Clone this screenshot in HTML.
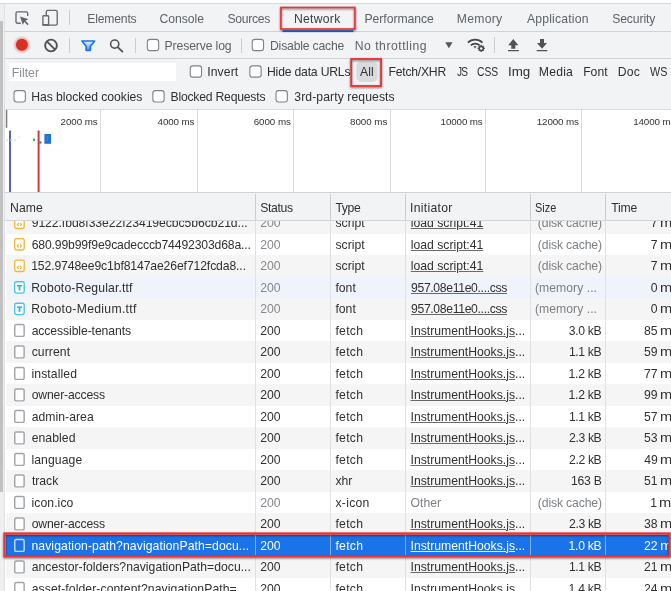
<!DOCTYPE html>
<html lang="en"><head><meta charset="utf-8"><title>DevTools - Network</title>
<style>
html,body{margin:0;padding:0;background:#fff}
body{width:671px;height:591px;overflow:hidden;position:relative;font-family:"Liberation Sans",sans-serif}
#root{will-change:transform;position:absolute;left:0;top:0;width:671px;height:591px;overflow:hidden;background:#fff}
.a{position:absolute}
.t{position:absolute;white-space:pre;line-height:16px;height:16px}
.bar{position:absolute;left:5px;width:666px;background:#f1f3f4}
.hl{position:absolute;left:5px;width:666px;height:1px;background:#cfd1d5}
.vs{position:absolute;width:1px;background:#cbcdd1}
.row{position:absolute;left:6px;width:665px;height:21.5px}
.lnk{text-decoration:underline;text-underline-offset:1.2px;text-decoration-thickness:0.9px;text-decoration-color:rgba(70,70,70,.8)}
.lnk3 u{text-decoration:underline;text-underline-offset:1.2px;text-decoration-thickness:0.9px;text-decoration-color:rgba(70,70,70,.8)}
.sel.lnk,.sel u{text-decoration-color:rgba(255,255,255,.9)}
.cl{position:absolute;width:1px;background:#dfe1e5}
</style></head><body><div id="root">

<div class="a" style="left:0;top:4px;width:4px;height:587px;background:#efefef"></div>
<div class="a" style="left:3.7px;top:4px;width:1px;height:587px;background:#dfe1e3"></div>
<div class="a" style="left:0;top:21px;width:2.6px;height:471px;background:#c1c1c1"></div>
<div class="a" style="left:0;top:3px;width:671px;height:1px;background:#d6d7d9"></div>
<div class="bar" style="top:4px;height:105px"></div>
<div class="hl" style="top:31px"></div>
<div class="hl" style="top:58px;background:#d0d2d6"></div>
<div class="hl" style="top:109px;background:#d5d7da"></div>
<svg class="a" style="left:12px;top:8px;overflow:visible" width="21" height="21"><g transform="translate(0.4 0)"><path d="M15.3 7.9V5.2a1.4 1.4 0 0 0-1.4-1.4H5a1.4 1.4 0 0 0-1.4 1.4v8.6A1.4 1.4 0 0 0 5 15.2h3.4" fill="none" stroke="#666a6e" stroke-width="1.35"/>
<path d="M7.7 8.4l8.4 2.9-3.2 1.4 3.4 3.4-1.1 1.1-3.4-3.4-1.4 3.1z" fill="#5f6368"/></g></svg>
<svg class="a" style="left:40px;top:8px;overflow:visible" width="21" height="21"><rect x="6.3" y="2.4" width="10.9" height="14.7" rx="1.4" fill="none" stroke="#666a6e" stroke-width="1.35"/>
<rect x="2.9" y="7.7" width="5.7" height="9.4" rx="0.8" fill="#f1f3f4" stroke="#666a6e" stroke-width="1.35"/>
<rect x="2.2" y="15.9" width="7.1" height="1.9" rx="0.8" fill="#666a6e"/></svg>
<div class="vs" style="left:69px;top:10px;height:15px"></div>
<svg class="a" style="left:282px;top:30px;overflow:visible" width="73" height="4"><g transform="translate(0.5 0.2)"><rect x="0" y="0" width="71" height="1.9" fill="#1a66d6"/></g></svg>
<svg class="a" style="left:280px;top:6px;overflow:visible;filter:drop-shadow(0.8px 1.3px 1.2px rgba(0,0,0,.55))" width="77" height="25"><g transform="translate(0.1 0.7)"><rect x="0.8" y="0.8" width="74.0" height="21.5" fill="none" stroke="#f03035" stroke-width="1.6"/></g></svg>
<svg class="a" style="left:14px;top:37px;overflow:visible" width="17" height="17"><defs><radialGradient id="rg"><stop offset="0.62" stop-color="#d93025" stop-opacity="0.38"/><stop offset="1" stop-color="#d93025" stop-opacity="0"/></radialGradient></defs><circle cx="7.9" cy="7.85" r="9.2" fill="url(#rg)"/><circle cx="7.9" cy="7.85" r="6.0" fill="#d93025"/></svg>
<svg class="a" style="left:43px;top:37px;overflow:visible" width="18" height="18"><circle cx="8.0" cy="8.5" r="5.85" fill="none" stroke="#505255" stroke-width="1.9"/><path d="M3.9 4.4l8.2 8.2" stroke="#505255" stroke-width="1.9"/></svg>
<div class="vs" style="left:69px;top:38px;height:15px"></div>
<svg class="a" style="left:80px;top:38px;overflow:visible" width="18" height="16"><defs><linearGradient id="fg" x1="0" y1="0" x2="0" y2="1"><stop offset="0" stop-color="#eef3fb"/><stop offset="0.45" stop-color="#a9c8f6"/><stop offset="1" stop-color="#3f86ee"/></linearGradient></defs>
<path d="M1.9 3h12.7l-4.2 5.3v3.6a0.6 0.6 0 0 1-0.6 0.6H6.7a0.6 0.6 0 0 1-0.6-0.6V8.3z" fill="url(#fg)" stroke="#1a73e8" stroke-width="1.6" stroke-linejoin="round"/></svg>
<svg class="a" style="left:108px;top:37px;overflow:visible" width="18" height="17"><g transform="translate(0 0.7)"><circle cx="6.7" cy="6.4" r="4.1" fill="none" stroke="#4f5256" stroke-width="1.6"/><path d="M9.7 9.4l5.2 5" stroke="#4f5256" stroke-width="1.8"/></g></svg>
<div class="vs" style="left:135px;top:38px;height:15px"></div>
<svg class="a" style="left:146px;top:38px;overflow:visible" width="14" height="14"><g transform="translate(0.8 0.8)"><rect x="0.55" y="0.55" width="11.3" height="11.3" rx="2.5" fill="#fff" stroke="#808285" stroke-width="1.1"/></g></svg>
<div class="vs" style="left:241px;top:38px;height:15px"></div>
<svg class="a" style="left:251px;top:38px;overflow:visible" width="14" height="14"><g transform="translate(0.7 0.8)"><rect x="0.55" y="0.55" width="11.3" height="11.3" rx="2.5" fill="#fff" stroke="#808285" stroke-width="1.1"/></g></svg>
<svg class="a" style="left:444px;top:41px;overflow:visible" width="10" height="8"><g transform="translate(0.6 0.8)"><path d="M0.6 0.4h7.4L4.3 6.4z" fill="#55585c"/></g></svg>
<svg class="a" style="left:466px;top:37px;overflow:visible" width="22" height="18"><path d="M1.9 5.6a10.3 10.3 0 0 1 14.6 0" fill="none" stroke="#45474a" stroke-width="1.7"/>
<path d="M4.8 8.4a6.3 6.3 0 0 1 8.8 0" fill="none" stroke="#45474a" stroke-width="1.7"/>
<path d="M7.4 9.3h3.2l-1.6 2.1z" fill="#45474a"/>
<g transform="translate(15.2 11.4)"><circle r="2.15" fill="none" stroke="#45474a" stroke-width="1.5"/>
<path d="M0 -3.6v7.2M-3.6 0h7.2M-2.5 -2.5l5 5M2.5 -2.5l-5 5" stroke="#45474a" stroke-width="1.15"/>
<circle r="1.25" fill="#f1f3f4"/></g></svg>
<div class="vs" style="left:494px;top:37px;height:16px"></div>
<svg class="a" style="left:507px;top:38px;overflow:visible" width="14" height="15"><path d="M6.3 0.9l5.1 6.3H8.3v3.6H4.3V7.2H1.2z" fill="#505255"/><rect x="1.0" y="12" width="10.8" height="1.25" fill="#505255"/></svg>
<svg class="a" style="left:535px;top:38px;overflow:visible" width="14" height="15"><g transform="translate(0.5 0)"><path d="M6.5 10.8L1.5 4.9h3V0.9h4v4h3z" fill="#505255"/><rect x="1.2" y="12" width="10.6" height="1.25" fill="#505255"/></g></svg>
<div class="a" style="left:9px;top:63px;width:167px;height:18px;background:#fff"></div>
<svg class="a" style="left:189px;top:65px;overflow:visible" width="14" height="14"><g transform="translate(0.7 0.3)"><rect x="0.55" y="0.55" width="11.3" height="11.3" rx="2.5" fill="#fff" stroke="#808285" stroke-width="1.1"/></g></svg>
<svg class="a" style="left:249px;top:65px;overflow:visible" width="14" height="14"><g transform="translate(0.3 0.3)"><rect x="0.55" y="0.55" width="11.3" height="11.3" rx="2.5" fill="#fff" stroke="#808285" stroke-width="1.1"/></g></svg>
<svg class="a" style="left:356px;top:61px;overflow:visible" width="23" height="22"><g transform="translate(0.4 0.4)"><rect x="0" y="0" width="21.2" height="20.6" rx="5" fill="#d8dadd"/></g></svg>
<svg class="a" style="left:350px;top:58px;overflow:visible;filter:drop-shadow(0.8px 1.3px 1.2px rgba(0,0,0,.55))" width="33" height="30"><g transform="translate(0.3 0.1)"><rect x="0.9" y="0.9" width="29.9" height="27.0" fill="none" stroke="#f03035" stroke-width="1.8"/></g></svg>
<svg class="a" style="left:13px;top:90px;overflow:visible" width="14" height="14"><g transform="translate(0.5 0.1)"><rect x="0.55" y="0.55" width="11.3" height="11.3" rx="2.5" fill="#fff" stroke="#808285" stroke-width="1.1"/></g></svg>
<svg class="a" style="left:152px;top:90px;overflow:visible" width="14" height="14"><g transform="translate(0.3 0.1)"><rect x="0.55" y="0.55" width="11.3" height="11.3" rx="2.5" fill="#fff" stroke="#808285" stroke-width="1.1"/></g></svg>
<svg class="a" style="left:275px;top:90px;overflow:visible" width="14" height="14"><g transform="translate(0.5 0.1)"><rect x="0.55" y="0.55" width="11.3" height="11.3" rx="2.5" fill="#fff" stroke="#808285" stroke-width="1.1"/></g></svg>
<div class="a" style="left:6px;top:110px;width:665px;height:82px;background:#fff"></div>
<div class="a" style="left:100px;top:110px;width:1px;height:82px;background:#dcdcdc"></div>
<div class="a" style="left:197px;top:110px;width:1px;height:82px;background:#dcdcdc"></div>
<div class="a" style="left:293px;top:110px;width:1px;height:82px;background:#dcdcdc"></div>
<div class="a" style="left:390px;top:110px;width:1px;height:82px;background:#dcdcdc"></div>
<div class="a" style="left:485px;top:110px;width:1px;height:82px;background:#dcdcdc"></div>
<div class="a" style="left:581px;top:110px;width:1px;height:82px;background:#dcdcdc"></div>
<svg class="a" style="left:0;top:0" width="120" height="195"><rect x="5.8" y="110" width="1.5" height="17.8" fill="#7d7d7d"/><rect x="9" y="130.5" width="2" height="61.5" fill="#5e5fc3"/><rect x="37.6" y="130.5" width="2" height="61.5" fill="#d8383c"/><rect x="44.4" y="134" width="6.6" height="9.8" fill="#1f6fe0"/><rect x="46.6" y="136" width="1.6" height="5" fill="#2e9d6b"/><rect x="33" y="138.6" width="2" height="2.4" fill="#36b06a"/><rect x="39.4" y="141.4" width="2" height="2.2" fill="#1f8a4d"/><rect x="6.5" y="139" width="1.6" height="2.4" fill="#c9ecf2"/><rect x="10.5" y="139" width="1.6" height="2.4" fill="#c9ecf2"/><rect x="14" y="139" width="1.6" height="2.4" fill="#c9ecf2"/><rect x="18.5" y="135.5" width="1" height="3" fill="#e3e6ea"/></svg>
<div class="hl" style="top:192px;left:5px"></div>
<div class="row" style="top:212.0px;background:#f5f5f5"></div>
<div class="row" style="top:233.5px;background:#fff"></div>
<div class="row" style="top:255.0px;background:#f5f5f5"></div>
<div class="row" style="top:276.5px;background:#eef3fc"></div>
<div class="row" style="top:298.0px;background:#f5f5f5"></div>
<div class="row" style="top:319.5px;background:#fff"></div>
<div class="row" style="top:341.0px;background:#f5f5f5"></div>
<div class="row" style="top:362.5px;background:#fff"></div>
<div class="row" style="top:384.0px;background:#f5f5f5"></div>
<div class="row" style="top:405.5px;background:#fff"></div>
<div class="row" style="top:427.0px;background:#f5f5f5"></div>
<div class="row" style="top:448.5px;background:#fff"></div>
<div class="row" style="top:470.0px;background:#f5f5f5"></div>
<div class="row" style="top:491.5px;background:#fff"></div>
<div class="row" style="top:513.0px;background:#f5f5f5"></div>
<div class="row" style="top:534.5px;background:#1a73e8;width:663px"></div>
<div class="row" style="top:556.0px;background:#f5f5f5"></div>
<div class="row" style="top:577.5px;background:#fff"></div>
<div class="cl" style="left:255px;top:221px;height:370px"></div>
<div class="cl" style="left:255px;top:534.5px;height:21.5px;background:#7fb0f2"></div>
<div class="cl" style="left:330px;top:221px;height:370px"></div>
<div class="cl" style="left:330px;top:534.5px;height:21.5px;background:#7fb0f2"></div>
<div class="cl" style="left:405px;top:221px;height:370px"></div>
<div class="cl" style="left:405px;top:534.5px;height:21.5px;background:#7fb0f2"></div>
<div class="cl" style="left:530px;top:221px;height:370px"></div>
<div class="cl" style="left:530px;top:534.5px;height:21.5px;background:#7fb0f2"></div>
<div class="cl" style="left:605px;top:221px;height:370px"></div>
<div class="cl" style="left:605px;top:534.5px;height:21.5px;background:#7fb0f2"></div>
<svg class="a" style="left:13px;top:215px;overflow:visible" width="13" height="15"><g transform="translate(0.5 0.85)"><rect x="1.2" y="1.2" width="9.5" height="11.4" rx="1.8" fill="#fffefa" stroke="#efb73e" stroke-width="1.35"/><path d="M5.25 7.1L3.85 8.55l1.4 1.45M6.65 7.1l1.4 1.45-1.4 1.45" fill="none" stroke="#efb73e" stroke-width="1.25"/></g></svg>
<svg class="a" style="left:13px;top:237px;overflow:visible" width="13" height="15"><g transform="translate(0.5 0.35)"><rect x="1.2" y="1.2" width="9.5" height="11.4" rx="1.8" fill="#fffefa" stroke="#efb73e" stroke-width="1.35"/><path d="M5.25 7.1L3.85 8.55l1.4 1.45M6.65 7.1l1.4 1.45-1.4 1.45" fill="none" stroke="#efb73e" stroke-width="1.25"/></g></svg>
<svg class="a" style="left:13px;top:258px;overflow:visible" width="13" height="15"><g transform="translate(0.5 0.85)"><rect x="1.2" y="1.2" width="9.5" height="11.4" rx="1.8" fill="#fffefa" stroke="#efb73e" stroke-width="1.35"/><path d="M5.25 7.1L3.85 8.55l1.4 1.45M6.65 7.1l1.4 1.45-1.4 1.45" fill="none" stroke="#efb73e" stroke-width="1.25"/></g></svg>
<svg class="a" style="left:13px;top:280px;overflow:visible" width="13" height="15"><g transform="translate(0.5 0.55)"><rect x="1.2" y="1.2" width="9.5" height="11.4" rx="1.8" fill="#fff" stroke="#45c4e4" stroke-width="1.35"/><path d="M3.5 5.1h5" fill="none" stroke="#2bb0dc" stroke-width="1.5"/><path d="M6 5.1v4.7" fill="none" stroke="#2bb0dc" stroke-width="1.8"/></g></svg>
<svg class="a" style="left:13px;top:302px;overflow:visible" width="13" height="15"><g transform="translate(0.5 0.05)"><rect x="1.2" y="1.2" width="9.5" height="11.4" rx="1.8" fill="#fff" stroke="#45c4e4" stroke-width="1.35"/><path d="M3.5 5.1h5" fill="none" stroke="#2bb0dc" stroke-width="1.5"/><path d="M6 5.1v4.7" fill="none" stroke="#2bb0dc" stroke-width="1.8"/></g></svg>
<svg class="a" style="left:13px;top:323px;overflow:visible" width="13" height="15"><g transform="translate(0.5 0.3)"><rect x="1.25" y="1.3" width="9.4" height="11.8" rx="1.5" fill="#fff" stroke="#a1a5aa" stroke-width="1.45"/></g></svg>
<svg class="a" style="left:13px;top:344px;overflow:visible" width="13" height="15"><g transform="translate(0.5 0.8)"><rect x="1.25" y="1.3" width="9.4" height="11.8" rx="1.5" fill="#fff" stroke="#a1a5aa" stroke-width="1.45"/></g></svg>
<svg class="a" style="left:13px;top:366px;overflow:visible" width="13" height="15"><g transform="translate(0.5 0.3)"><rect x="1.25" y="1.3" width="9.4" height="11.8" rx="1.5" fill="#fff" stroke="#a1a5aa" stroke-width="1.45"/></g></svg>
<svg class="a" style="left:13px;top:387px;overflow:visible" width="13" height="15"><g transform="translate(0.5 0.8)"><rect x="1.25" y="1.3" width="9.4" height="11.8" rx="1.5" fill="#fff" stroke="#a1a5aa" stroke-width="1.45"/></g></svg>
<svg class="a" style="left:13px;top:409px;overflow:visible" width="13" height="15"><g transform="translate(0.5 0.3)"><rect x="1.25" y="1.3" width="9.4" height="11.8" rx="1.5" fill="#fff" stroke="#a1a5aa" stroke-width="1.45"/></g></svg>
<svg class="a" style="left:13px;top:430px;overflow:visible" width="13" height="15"><g transform="translate(0.5 0.8)"><rect x="1.25" y="1.3" width="9.4" height="11.8" rx="1.5" fill="#fff" stroke="#a1a5aa" stroke-width="1.45"/></g></svg>
<svg class="a" style="left:13px;top:452px;overflow:visible" width="13" height="15"><g transform="translate(0.5 0.3)"><rect x="1.25" y="1.3" width="9.4" height="11.8" rx="1.5" fill="#fff" stroke="#a1a5aa" stroke-width="1.45"/></g></svg>
<svg class="a" style="left:13px;top:473px;overflow:visible" width="13" height="15"><g transform="translate(0.5 0.8)"><rect x="1.25" y="1.3" width="9.4" height="11.8" rx="1.5" fill="#fff" stroke="#a1a5aa" stroke-width="1.45"/></g></svg>
<svg class="a" style="left:13px;top:495px;overflow:visible" width="13" height="15"><g transform="translate(0.5 0.3)"><rect x="1.25" y="1.3" width="9.4" height="11.8" rx="1.5" fill="#fff" stroke="#a1a5aa" stroke-width="1.45"/></g></svg>
<svg class="a" style="left:13px;top:516px;overflow:visible" width="13" height="15"><g transform="translate(0.5 0.8)"><rect x="1.25" y="1.3" width="9.4" height="11.8" rx="1.5" fill="#fff" stroke="#a1a5aa" stroke-width="1.45"/></g></svg>
<svg class="a" style="left:13px;top:538px;overflow:visible" width="13" height="15"><g transform="translate(0.5 0.3)"><rect x="1.25" y="1.3" width="9.4" height="11.8" rx="1.5" fill="#1a73e8" stroke="#c6dafa" stroke-width="1.45"/></g></svg>
<svg class="a" style="left:13px;top:559px;overflow:visible" width="13" height="15"><g transform="translate(0.5 0.8)"><rect x="1.25" y="1.3" width="9.4" height="11.8" rx="1.5" fill="#fff" stroke="#a1a5aa" stroke-width="1.45"/></g></svg>
<svg class="a" style="left:13px;top:581px;overflow:visible" width="13" height="15"><g transform="translate(0.5 0.3)"><rect x="1.25" y="1.3" width="9.4" height="11.8" rx="1.5" fill="#fff" stroke="#a1a5aa" stroke-width="1.45"/></g></svg>
<span class="t r" style="left:31.70px;top:215.00px;font-size:12.2px;color:#303030;letter-spacing:-0.066px">9122.fbd8f33e22f23419ecbc5b6cb21d...</span>
<span class="t r" style="left:260.20px;top:215.00px;font-size:12.2px;color:#85888c;letter-spacing:0.000px">200</span>
<span class="t r" style="left:335.45px;top:215.00px;font-size:12.2px;color:#303030;letter-spacing:0.030px">script</span>
<span class="t r lnk" style="left:410.75px;top:215.00px;font-size:12.2px;color:#303030;letter-spacing:0.004px">load script:41</span>
<span class="t r" style="left:537.85px;top:215.00px;font-size:12.2px;color:#7d8084;letter-spacing:-0.141px">(disk cache)</span>
<span class="t r" style="left:650.80px;top:215.00px;font-size:12.2px;color:#303030;letter-spacing:0.000px;word-spacing:-1.3px">7 <span style="display:inline-block;transform:scaleX(1.2);transform-origin:0 0;letter-spacing:2px">ms</span></span>
<span class="t r" style="left:31.70px;top:237.00px;font-size:12.2px;color:#303030;letter-spacing:-0.144px">680.99b99f9e9cadecccb74492303d68a...</span>
<span class="t r" style="left:260.20px;top:237.00px;font-size:12.2px;color:#85888c;letter-spacing:0.000px">200</span>
<span class="t r" style="left:335.45px;top:237.00px;font-size:12.2px;color:#303030;letter-spacing:0.030px">script</span>
<span class="t r lnk" style="left:410.75px;top:237.00px;font-size:12.2px;color:#303030;letter-spacing:0.004px">load script:41</span>
<span class="t r" style="left:537.85px;top:237.00px;font-size:12.2px;color:#7d8084;letter-spacing:-0.141px">(disk cache)</span>
<span class="t r" style="left:650.80px;top:237.00px;font-size:12.2px;color:#303030;letter-spacing:0.000px;word-spacing:-1.3px">7 <span style="display:inline-block;transform:scaleX(1.2);transform-origin:0 0;letter-spacing:2px">ms</span></span>
<span class="t r" style="left:31.20px;top:258.00px;font-size:12.2px;color:#303030;letter-spacing:-0.116px">152.9748ee9c1bf8147ae26ef712fcda8...</span>
<span class="t r" style="left:260.20px;top:258.00px;font-size:12.2px;color:#85888c;letter-spacing:0.000px">200</span>
<span class="t r" style="left:335.45px;top:258.00px;font-size:12.2px;color:#303030;letter-spacing:0.030px">script</span>
<span class="t r lnk" style="left:410.75px;top:258.00px;font-size:12.2px;color:#303030;letter-spacing:0.004px">load script:41</span>
<span class="t r" style="left:537.85px;top:258.00px;font-size:12.2px;color:#7d8084;letter-spacing:-0.141px">(disk cache)</span>
<span class="t r" style="left:650.80px;top:258.00px;font-size:12.2px;color:#303030;letter-spacing:0.000px;word-spacing:-1.3px">7 <span style="display:inline-block;transform:scaleX(1.2);transform-origin:0 0;letter-spacing:2px">ms</span></span>
<span class="t r" style="left:31.20px;top:280.00px;font-size:12.2px;color:#303030;letter-spacing:0.135px">Roboto-Regular.ttf</span>
<span class="t r" style="left:260.20px;top:280.00px;font-size:12.2px;color:#85888c;letter-spacing:0.000px">200</span>
<span class="t r" style="left:335.45px;top:280.00px;font-size:12.2px;color:#303030;letter-spacing:0.000px">font</span>
<span class="t r lnk" style="left:411.00px;top:280.00px;font-size:12.2px;color:#303030;letter-spacing:-0.338px">957.08e11e0....css</span>
<span class="t r" style="left:534.95px;top:280.00px;font-size:12.2px;color:#7d8084;letter-spacing:0.045px">(memory ...</span>
<span class="t r" style="left:650.80px;top:280.00px;font-size:12.2px;color:#303030;letter-spacing:0.000px;word-spacing:-1.3px">0 <span style="display:inline-block;transform:scaleX(1.2);transform-origin:0 0;letter-spacing:2px">ms</span></span>
<span class="t r" style="left:31.20px;top:301.00px;font-size:12.2px;color:#303030;letter-spacing:0.309px">Roboto-Medium.ttf</span>
<span class="t r" style="left:260.20px;top:301.00px;font-size:12.2px;color:#85888c;letter-spacing:0.000px">200</span>
<span class="t r" style="left:335.45px;top:301.00px;font-size:12.2px;color:#303030;letter-spacing:0.000px">font</span>
<span class="t r lnk" style="left:411.00px;top:301.00px;font-size:12.2px;color:#303030;letter-spacing:-0.338px">957.08e11e0....css</span>
<span class="t r" style="left:534.95px;top:301.00px;font-size:12.2px;color:#7d8084;letter-spacing:0.045px">(memory ...</span>
<span class="t r" style="left:650.80px;top:301.00px;font-size:12.2px;color:#303030;letter-spacing:0.000px;word-spacing:-1.3px">0 <span style="display:inline-block;transform:scaleX(1.2);transform-origin:0 0;letter-spacing:2px">ms</span></span>
<span class="t r" style="left:31.70px;top:323.00px;font-size:12.2px;color:#303030;letter-spacing:-0.094px">accessible-tenants</span>
<span class="t r" style="left:260.20px;top:323.00px;font-size:12.2px;color:#303030;letter-spacing:0.000px">200</span>
<span class="t r" style="left:335.45px;top:323.00px;font-size:12.2px;color:#303030;letter-spacing:0.275px">fetch</span>
<span class="t r lnk3" style="left:410.50px;top:323.00px;font-size:12.2px;color:#303030;letter-spacing:0.013px"><u>InstrumentHooks.js</u>...</span>
<span class="t r" style="left:568.80px;top:323.00px;font-size:12.2px;color:#303030;letter-spacing:-0.320px">3.0 kB</span>
<span class="t r" style="left:644.10px;top:323.00px;font-size:12.2px;color:#303030;letter-spacing:0.000px;word-spacing:-1.3px">85 <span style="display:inline-block;transform:scaleX(1.2);transform-origin:0 0;letter-spacing:2px">ms</span></span>
<span class="t r" style="left:31.70px;top:344.00px;font-size:12.2px;color:#303030;letter-spacing:0.067px">current</span>
<span class="t r" style="left:260.20px;top:344.00px;font-size:12.2px;color:#303030;letter-spacing:0.000px">200</span>
<span class="t r" style="left:335.45px;top:344.00px;font-size:12.2px;color:#303030;letter-spacing:0.275px">fetch</span>
<span class="t r lnk3" style="left:410.50px;top:344.00px;font-size:12.2px;color:#303030;letter-spacing:0.013px"><u>InstrumentHooks.js</u>...</span>
<span class="t r" style="left:568.90px;top:344.00px;font-size:12.2px;color:#303030;letter-spacing:-0.340px">1.1 kB</span>
<span class="t r" style="left:644.10px;top:344.00px;font-size:12.2px;color:#303030;letter-spacing:0.000px;word-spacing:-1.3px">59 <span style="display:inline-block;transform:scaleX(1.2);transform-origin:0 0;letter-spacing:2px">ms</span></span>
<span class="t r" style="left:31.45px;top:366.00px;font-size:12.2px;color:#303030;letter-spacing:0.106px">installed</span>
<span class="t r" style="left:260.20px;top:366.00px;font-size:12.2px;color:#303030;letter-spacing:0.000px">200</span>
<span class="t r" style="left:335.45px;top:366.00px;font-size:12.2px;color:#303030;letter-spacing:0.275px">fetch</span>
<span class="t r lnk3" style="left:410.50px;top:366.00px;font-size:12.2px;color:#303030;letter-spacing:0.013px"><u>InstrumentHooks.js</u>...</span>
<span class="t r" style="left:568.60px;top:366.00px;font-size:12.2px;color:#303030;letter-spacing:-0.280px">1.2 kB</span>
<span class="t r" style="left:644.10px;top:366.00px;font-size:12.2px;color:#303030;letter-spacing:0.000px;word-spacing:-1.3px">77 <span style="display:inline-block;transform:scaleX(1.2);transform-origin:0 0;letter-spacing:2px">ms</span></span>
<span class="t r" style="left:31.70px;top:387.00px;font-size:12.2px;color:#303030;letter-spacing:-0.168px">owner-access</span>
<span class="t r" style="left:260.20px;top:387.00px;font-size:12.2px;color:#303030;letter-spacing:0.000px">200</span>
<span class="t r" style="left:335.45px;top:387.00px;font-size:12.2px;color:#303030;letter-spacing:0.275px">fetch</span>
<span class="t r lnk3" style="left:410.50px;top:387.00px;font-size:12.2px;color:#303030;letter-spacing:0.013px"><u>InstrumentHooks.js</u>...</span>
<span class="t r" style="left:568.60px;top:387.00px;font-size:12.2px;color:#303030;letter-spacing:-0.280px">1.2 kB</span>
<span class="t r" style="left:644.10px;top:387.00px;font-size:12.2px;color:#303030;letter-spacing:0.000px;word-spacing:-1.3px">99 <span style="display:inline-block;transform:scaleX(1.2);transform-origin:0 0;letter-spacing:2px">ms</span></span>
<span class="t r" style="left:31.70px;top:409.00px;font-size:12.2px;color:#303030;letter-spacing:0.039px">admin-area</span>
<span class="t r" style="left:260.20px;top:409.00px;font-size:12.2px;color:#303030;letter-spacing:0.000px">200</span>
<span class="t r" style="left:335.45px;top:409.00px;font-size:12.2px;color:#303030;letter-spacing:0.275px">fetch</span>
<span class="t r lnk3" style="left:410.50px;top:409.00px;font-size:12.2px;color:#303030;letter-spacing:0.013px"><u>InstrumentHooks.js</u>...</span>
<span class="t r" style="left:568.90px;top:409.00px;font-size:12.2px;color:#303030;letter-spacing:-0.340px">1.1 kB</span>
<span class="t r" style="left:644.10px;top:409.00px;font-size:12.2px;color:#303030;letter-spacing:0.000px;word-spacing:-1.3px">57 <span style="display:inline-block;transform:scaleX(1.2);transform-origin:0 0;letter-spacing:2px">ms</span></span>
<span class="t r" style="left:31.70px;top:430.00px;font-size:12.2px;color:#303030;letter-spacing:0.058px">enabled</span>
<span class="t r" style="left:260.20px;top:430.00px;font-size:12.2px;color:#303030;letter-spacing:0.000px">200</span>
<span class="t r" style="left:335.45px;top:430.00px;font-size:12.2px;color:#303030;letter-spacing:0.275px">fetch</span>
<span class="t r lnk3" style="left:410.50px;top:430.00px;font-size:12.2px;color:#303030;letter-spacing:0.013px"><u>InstrumentHooks.js</u>...</span>
<span class="t r" style="left:569.10px;top:430.00px;font-size:12.2px;color:#303030;letter-spacing:-0.380px">2.3 kB</span>
<span class="t r" style="left:644.10px;top:430.00px;font-size:12.2px;color:#303030;letter-spacing:0.000px;word-spacing:-1.3px">53 <span style="display:inline-block;transform:scaleX(1.2);transform-origin:0 0;letter-spacing:2px">ms</span></span>
<span class="t r" style="left:31.45px;top:452.00px;font-size:12.2px;color:#303030;letter-spacing:0.086px">language</span>
<span class="t r" style="left:260.20px;top:452.00px;font-size:12.2px;color:#303030;letter-spacing:0.000px">200</span>
<span class="t r" style="left:335.45px;top:452.00px;font-size:12.2px;color:#303030;letter-spacing:0.275px">fetch</span>
<span class="t r lnk3" style="left:410.50px;top:452.00px;font-size:12.2px;color:#303030;letter-spacing:0.013px"><u>InstrumentHooks.js</u>...</span>
<span class="t r" style="left:569.10px;top:452.00px;font-size:12.2px;color:#303030;letter-spacing:-0.380px">2.2 kB</span>
<span class="t r" style="left:644.35px;top:452.00px;font-size:12.2px;color:#303030;letter-spacing:0.000px;word-spacing:-1.3px">49 <span style="display:inline-block;transform:scaleX(1.2);transform-origin:0 0;letter-spacing:2px">ms</span></span>
<span class="t r" style="left:31.95px;top:473.00px;font-size:12.2px;color:#303030;letter-spacing:-0.025px">track</span>
<span class="t r" style="left:260.20px;top:473.00px;font-size:12.2px;color:#303030;letter-spacing:0.000px">200</span>
<span class="t r" style="left:335.45px;top:473.00px;font-size:12.2px;color:#303030;letter-spacing:0.000px">xhr</span>
<span class="t r lnk3" style="left:410.50px;top:473.00px;font-size:12.2px;color:#303030;letter-spacing:0.013px"><u>InstrumentHooks.js</u>...</span>
<span class="t r" style="left:571.00px;top:473.00px;font-size:12.2px;color:#303030;letter-spacing:-0.262px">163 B</span>
<span class="t r" style="left:644.10px;top:473.00px;font-size:12.2px;color:#303030;letter-spacing:0.000px;word-spacing:-1.3px">51 <span style="display:inline-block;transform:scaleX(1.2);transform-origin:0 0;letter-spacing:2px">ms</span></span>
<span class="t r" style="left:31.45px;top:495.00px;font-size:12.2px;color:#303030;letter-spacing:0.086px">icon.ico</span>
<span class="t r" style="left:260.20px;top:495.00px;font-size:12.2px;color:#85888c;letter-spacing:0.000px">200</span>
<span class="t r" style="left:335.45px;top:495.00px;font-size:12.2px;color:#303030;letter-spacing:0.280px">x-icon</span>
<span class="t r" style="left:410.60px;top:495.00px;font-size:12.2px;color:#7d8084;letter-spacing:0.000px">Other</span>
<span class="t r" style="left:537.85px;top:495.00px;font-size:12.2px;color:#7d8084;letter-spacing:-0.141px">(disk cache)</span>
<span class="t r" style="left:650.30px;top:495.00px;font-size:12.2px;color:#303030;letter-spacing:0.000px;word-spacing:-1.3px">1 <span style="display:inline-block;transform:scaleX(1.2);transform-origin:0 0;letter-spacing:2px">ms</span></span>
<span class="t r" style="left:31.70px;top:516.00px;font-size:12.2px;color:#303030;letter-spacing:-0.168px">owner-access</span>
<span class="t r" style="left:260.20px;top:516.00px;font-size:12.2px;color:#303030;letter-spacing:0.000px">200</span>
<span class="t r" style="left:335.45px;top:516.00px;font-size:12.2px;color:#303030;letter-spacing:0.275px">fetch</span>
<span class="t r lnk3" style="left:410.50px;top:516.00px;font-size:12.2px;color:#303030;letter-spacing:0.013px"><u>InstrumentHooks.js</u>...</span>
<span class="t r" style="left:569.10px;top:516.00px;font-size:12.2px;color:#303030;letter-spacing:-0.380px">2.3 kB</span>
<span class="t r" style="left:644.10px;top:516.00px;font-size:12.2px;color:#303030;letter-spacing:0.000px;word-spacing:-1.3px">38 <span style="display:inline-block;transform:scaleX(1.2);transform-origin:0 0;letter-spacing:2px">ms</span></span>
<span class="t r sel" style="left:31.45px;top:538.00px;font-size:12.2px;color:#fff;letter-spacing:0.089px">navigation-path?navigationPath=docu...</span>
<span class="t r sel" style="left:260.20px;top:538.00px;font-size:12.2px;color:#fff;letter-spacing:0.000px">200</span>
<span class="t r sel" style="left:335.45px;top:538.00px;font-size:12.2px;color:#fff;letter-spacing:0.275px">fetch</span>
<span class="t r sel lnk3" style="left:410.50px;top:538.00px;font-size:12.2px;color:#fff;letter-spacing:0.013px"><u>InstrumentHooks.js</u>...</span>
<span class="t r sel" style="left:568.60px;top:538.00px;font-size:12.2px;color:#fff;letter-spacing:-0.280px">1.0 kB</span>
<span class="t r sel" style="left:644.10px;top:538.00px;font-size:12.2px;color:#fff;letter-spacing:0.000px;word-spacing:-1.3px">22 <span style="display:inline-block;transform:scaleX(1.2);transform-origin:0 0;letter-spacing:2px">ms</span></span>
<span class="t r" style="left:31.70px;top:559.00px;font-size:12.2px;color:#303030;letter-spacing:0.018px">ancestor-folders?navigationPath=docu...</span>
<span class="t r" style="left:260.20px;top:559.00px;font-size:12.2px;color:#303030;letter-spacing:0.000px">200</span>
<span class="t r" style="left:335.45px;top:559.00px;font-size:12.2px;color:#303030;letter-spacing:0.275px">fetch</span>
<span class="t r lnk3" style="left:410.50px;top:559.00px;font-size:12.2px;color:#303030;letter-spacing:0.013px"><u>InstrumentHooks.js</u>...</span>
<span class="t r" style="left:568.90px;top:559.00px;font-size:12.2px;color:#303030;letter-spacing:-0.340px">1.1 kB</span>
<span class="t r" style="left:644.10px;top:559.00px;font-size:12.2px;color:#303030;letter-spacing:0.000px;word-spacing:-1.3px">21 <span style="display:inline-block;transform:scaleX(1.2);transform-origin:0 0;letter-spacing:2px">ms</span></span>
<span class="t r" style="left:31.70px;top:581.00px;font-size:12.2px;color:#303030;letter-spacing:0.080px">asset-folder-content?navigationPath=...</span>
<span class="t r" style="left:260.20px;top:581.00px;font-size:12.2px;color:#303030;letter-spacing:0.000px">200</span>
<span class="t r" style="left:335.45px;top:581.00px;font-size:12.2px;color:#303030;letter-spacing:0.275px">fetch</span>
<span class="t r lnk3" style="left:410.50px;top:581.00px;font-size:12.2px;color:#303030;letter-spacing:0.013px"><u>InstrumentHooks.js</u>...</span>
<span class="t r" style="left:568.60px;top:581.00px;font-size:12.2px;color:#303030;letter-spacing:-0.280px">1.4 kB</span>
<span class="t r" style="left:644.10px;top:581.00px;font-size:12.2px;color:#303030;letter-spacing:0.000px;word-spacing:-1.3px">24 <span style="display:inline-block;transform:scaleX(1.2);transform-origin:0 0;letter-spacing:2px">ms</span></span>
<div class="a" style="left:5px;top:193px;width:666px;height:27px;background:#f1f3f4"></div>
<div class="a" style="left:5px;top:220px;width:666px;height:1px;background:#d3d5d9"></div>
<div class="vs" style="left:255px;top:194px;height:26px"></div>
<div class="vs" style="left:330px;top:194px;height:26px"></div>
<div class="vs" style="left:405px;top:194px;height:26px"></div>
<div class="vs" style="left:530px;top:194px;height:26px"></div>
<div class="vs" style="left:605px;top:194px;height:26px"></div>
<span class="t" style="left:87.30px;top:11.00px;font-size:12.2px;color:#5f6368;letter-spacing:-0.207px">Elements</span>
<span class="t" style="left:159.50px;top:11.00px;font-size:12.2px;color:#5f6368;letter-spacing:-0.025px">Console</span>
<span class="t" style="left:227.50px;top:11.00px;font-size:12.2px;color:#5f6368;letter-spacing:-0.325px">Sources</span>
<span class="t" style="left:294.00px;top:11.00px;font-size:12.2px;color:#3c4043;letter-spacing:0.258px">Network</span>
<span class="t" style="left:364.50px;top:11.00px;font-size:12.2px;color:#5f6368;letter-spacing:-0.045px">Performance</span>
<span class="t" style="left:456.70px;top:11.00px;font-size:12.2px;color:#5f6368;letter-spacing:0.300px">Memory</span>
<span class="t" style="left:527.00px;top:11.00px;font-size:12.2px;color:#5f6368;letter-spacing:0.180px">Application</span>
<span class="t" style="left:612.20px;top:11.00px;font-size:12.2px;color:#5f6368;letter-spacing:-0.129px">Security</span>
<span class="t" style="left:164.60px;top:38.00px;font-size:12.2px;color:#5f6368;letter-spacing:-0.132px">Preserve log</span>
<span class="t" style="left:270.00px;top:38.00px;font-size:12.2px;color:#5f6368;letter-spacing:-0.183px">Disable cache</span>
<span class="t" style="left:354.70px;top:38.00px;font-size:12.2px;color:#5f6368;letter-spacing:0.517px">No throttling</span>
<span class="t" style="left:11.80px;top:65.00px;font-size:12.2px;color:#8a8d91;letter-spacing:0.020px">Filter</span>
<span class="t" style="left:207.30px;top:64.00px;font-size:12.2px;color:#303030;letter-spacing:0.080px">Invert</span>
<span class="t" style="left:267.00px;top:64.00px;font-size:12.2px;color:#303030;letter-spacing:-0.192px">Hide data URLs</span>
<span class="t" style="left:360.00px;top:64.00px;font-size:12.2px;color:#303030;letter-spacing:0.125px">All</span>
<span class="t" style="left:388.50px;top:64.00px;font-size:12.2px;color:#303030;letter-spacing:-0.237px">Fetch/XHR</span>
<span class="t" style="left:456.69px;top:64.00px;font-size:12.2px;color:#303030;letter-spacing:-0.970px;transform:scaleX(0.830);transform-origin:0 0">JS</span>
<span class="t" style="left:477.18px;top:64.00px;font-size:12.2px;color:#303030;letter-spacing:0.000px;transform:scaleX(0.846);transform-origin:0 0">CSS</span>
<span class="t" style="left:507.60px;top:64.00px;font-size:12.2px;color:#303030;letter-spacing:0.000px;transform:scaleX(1.097);transform-origin:0 0">Img</span>
<span class="t" style="left:538.80px;top:64.00px;font-size:12.2px;color:#303030;letter-spacing:0.213px">Media</span>
<span class="t" style="left:583.20px;top:64.00px;font-size:12.2px;color:#303030;letter-spacing:-0.017px">Font</span>
<span class="t" style="left:617.70px;top:64.00px;font-size:12.2px;color:#303030;letter-spacing:0.275px">Doc</span>
<span class="t" style="left:649.80px;top:64.00px;font-size:12.2px;color:#303030;letter-spacing:0.000px;transform:scaleX(0.884);transform-origin:0 0">WS</span>
<span class="t" style="left:31.20px;top:89.00px;font-size:12.2px;color:#303030;letter-spacing:-0.031px">Has blocked cookies</span>
<span class="t" style="left:170.50px;top:89.00px;font-size:12.2px;color:#303030;letter-spacing:-0.217px">Blocked Requests</span>
<span class="t" style="left:294.30px;top:89.00px;font-size:12.2px;color:#303030;letter-spacing:0.088px">3rd-party requests</span>
<span class="t" style="left:60.50px;top:114.00px;font-size:9.8px;color:#333;letter-spacing:-0.058px">2000 ms</span>
<span class="t" style="left:157.55px;top:114.00px;font-size:9.8px;color:#333;letter-spacing:-0.100px">4000 ms</span>
<span class="t" style="left:253.70px;top:114.00px;font-size:9.8px;color:#333;letter-spacing:-0.058px">6000 ms</span>
<span class="t" style="left:350.10px;top:114.00px;font-size:9.8px;color:#333;letter-spacing:-0.058px">8000 ms</span>
<span class="t" style="left:440.55px;top:114.00px;font-size:9.8px;color:#333;letter-spacing:-0.114px">10000 ms</span>
<span class="t" style="left:536.75px;top:114.00px;font-size:9.8px;color:#333;letter-spacing:-0.114px">12000 ms</span>
<span class="t" style="left:633.15px;top:114.00px;font-size:9.8px;color:#333;letter-spacing:-0.114px">14000 ms</span>
<span class="t" style="left:10.00px;top:200.00px;font-size:12.2px;color:#303030;letter-spacing:0.100px">Name</span>
<span class="t" style="left:260.20px;top:200.00px;font-size:12.2px;color:#303030;letter-spacing:-0.340px">Status</span>
<span class="t" style="left:335.45px;top:200.00px;font-size:12.2px;color:#303030;letter-spacing:-0.383px">Type</span>
<span class="t" style="left:410.10px;top:200.00px;font-size:12.2px;color:#303030;letter-spacing:0.281px">Initiator</span>
<span class="t" style="left:535.15px;top:200.00px;font-size:12.2px;color:#303030;letter-spacing:0.000px;transform:scaleX(0.897);transform-origin:0 0">Size</span>
<span class="t" style="left:611.15px;top:200.00px;font-size:12.2px;color:#303030;letter-spacing:-0.200px">Time</span>
<svg class="a" style="left:3px;top:532px;overflow:visible;filter:drop-shadow(0.8px 1.3px 1.2px rgba(0,0,0,.55))" width="669" height="26"><g transform="translate(0.4 0.4)"><rect x="1.15" y="1.15" width="665.0" height="22.7" fill="none" stroke="#f03035" stroke-width="2.3"/></g></svg>
</div></body></html>
